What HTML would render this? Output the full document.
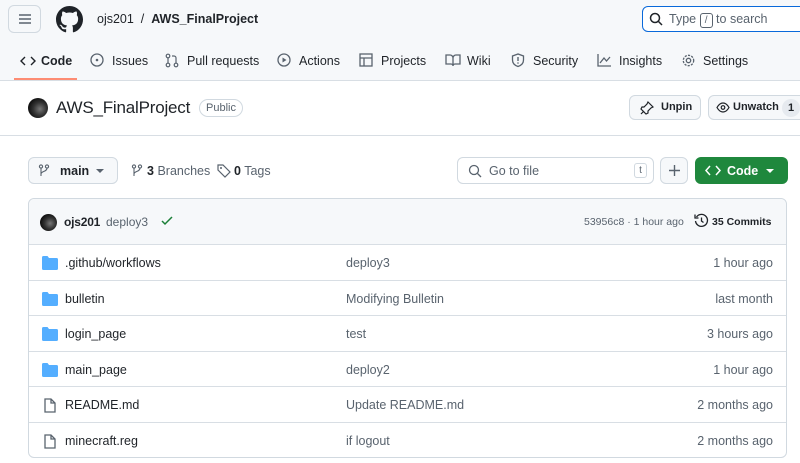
<!DOCTYPE html>
<html><head><meta charset="utf-8"><style>
*{box-sizing:border-box;margin:0;padding:0}
body{width:800px;height:463px;overflow:hidden;background:#fff;font-family:"Liberation Sans",sans-serif;color:#1f2328;font-size:12px;position:relative}
.a{position:absolute;white-space:nowrap}
.hdr{position:absolute;left:0;top:0;width:800px;height:81px;background:#f6f8fa;border-bottom:1px solid #d8dee4}
.btn{position:absolute;border:1px solid #d1d9e0;border-radius:6px;background:#f6f8fa}
svg{position:absolute}
.tab{position:absolute;top:54px;font-size:12.5px;color:#1f2328}
.row{position:absolute;left:29px;width:757px;height:35.5px;border-top:1px solid #d8dee4;font-size:12.5px}
.row .n{position:absolute;left:36px;top:11px}
.row .m{position:absolute;left:317px;top:11px;color:#59636e}
.row .t{position:absolute;right:13px;top:11px;color:#59636e}
.row svg{left:13px;top:11px}
</style></head><body>
<div class="hdr"></div>
<div class="btn" style="left:8px;top:5px;width:33px;height:28px"></div>
<svg style="left:18px;top:13px" width="14" height="12"><path d="M1 2h12M1 6h12M1 10h12" stroke="#59636e" stroke-width="1.5"/></svg>
<svg style="left:56px;top:6px" width="27" height="27" viewBox="0 0 16 16"><path fill="#1f2328" d="M8 0C3.58 0 0 3.58 0 8c0 3.540 2.29 6.53 5.47 7.59.4.07.55-.17.55-.38 0-.19-.01-.82-.01-1.49-2.010.37-2.53-.49-2.69-.94-.09-.23-.48-.94-.82-1.13-.28-.15-.68-.52-.01-.53.63-.01 1.08.58 1.23.82.72 1.21 1.87.87 2.33.66.07-.52.28-.87.51-1.070-1.78-.2-3.64-.89-3.64-3.95 0-.87.31-1.59.82-2.15-.08-.2-.36-1.02.08-2.12 0 0 .67-.21 2.2.82.64-.18 1.32-.27 2-.27.68 0 1.36.09 2 .27 1.53-1.04 2.2-.82 2.2-.82.44 1.1.16 1.92.08 2.12.51.56.82 1.27.82 2.15 0 3.07-1.87 3.75-3.65 3.95.29.25.54.73.54 1.48 0 1.07-.01 1.93-.01 2.2 0 .21.15.46.55.38A8.013 8.013 0 0016 8c0-4.42-3.58-8-8-8z"/></svg>
<div class="a" style="left:97px;top:12px;font-size:12.5px">ojs201 &nbsp;/&nbsp; <b style="font-weight:600">AWS_FinalProject</b></div>
<div class="a" style="left:642px;top:6px;width:170px;height:26px;border:1.5px solid #0969da;border-radius:6px;background:#fff"></div>
<svg style="left:649px;top:12px" width="14" height="14"><circle cx="6" cy="6" r="4.5" fill="none" stroke="#1f2328" stroke-width="1.5"/><path d="M9.5 9.5l3.5 3.5" stroke="#1f2328" stroke-width="1.5"/></svg>
<div class="a" style="left:669px;top:12px;color:#59636e;font-size:12.5px">Type <span style="display:inline-block;border:1px solid #59636e;border-radius:3px;width:13px;height:15px;text-align:center;font-size:10px;line-height:13px">/</span> to search</div>

<svg style="left:20px;top:55px" width="16" height="12"><path d="M5 2L1 6l4 4M11 2l4 4-4 4" fill="none" stroke="#1f2328" stroke-width="1.4"/></svg>
<div class="tab" style="left:41px;font-weight:600">Code</div>
<div class="a" style="left:14px;top:78px;width:63px;height:2px;background:#fd8c73"></div>
<svg style="left:90px;top:53px" width="15" height="15"><circle cx="7" cy="7" r="6" fill="none" stroke="#59636e" stroke-width="1.3"/><circle cx="7" cy="7" r="1.3" fill="#59636e"/></svg>
<div class="tab" style="left:112px">Issues</div>
<svg style="left:165px;top:53px" width="15" height="15"><circle cx="3" cy="3" r="1.8" fill="none" stroke="#59636e" stroke-width="1.2"/><circle cx="3" cy="12" r="1.8" fill="none" stroke="#59636e" stroke-width="1.2"/><circle cx="11" cy="12" r="1.8" fill="none" stroke="#59636e" stroke-width="1.2"/><path d="M3 5v5M11 10V5a2 2 0 0 0-2-2H7" fill="none" stroke="#59636e" stroke-width="1.2"/></svg>
<div class="tab" style="left:187px">Pull requests</div>
<svg style="left:277px;top:53px" width="15" height="15"><circle cx="7" cy="7" r="6" fill="none" stroke="#59636e" stroke-width="1.3"/><path d="M5.5 4.5v5l4-2.5z" fill="#59636e"/></svg>
<div class="tab" style="left:299px">Actions</div>
<svg style="left:359px;top:53px" width="15" height="15"><rect x="1" y="1" width="12" height="12" fill="none" stroke="#59636e" stroke-width="1.3"/><path d="M1 5h12M5 5v8" stroke="#59636e" stroke-width="1.3"/></svg>
<div class="tab" style="left:381px">Projects</div>
<svg style="left:445px;top:54px" width="16" height="13"><path d="M1 1h4a3 3 0 0 1 3 3v8a2 2 0 0 0-2-2H1zM15 1h-4a3 3 0 0 0-3 3v8a2 2 0 0 1 2-2h5z" fill="none" stroke="#59636e" stroke-width="1.3"/></svg>
<div class="tab" style="left:467px">Wiki</div>
<svg style="left:511px;top:53px" width="14" height="15"><path d="M7 1L1.5 3v4c0 3.5 2.5 5.5 5.5 6.5 3-1 5.5-3 5.5-6.5V3z" fill="none" stroke="#59636e" stroke-width="1.3"/><path d="M7 4v4" stroke="#59636e" stroke-width="1.4"/><circle cx="7" cy="10" r=".8" fill="#59636e"/></svg>
<div class="tab" style="left:533px">Security</div>
<svg style="left:597px;top:53px" width="15" height="15"><path d="M1 1v12h13M3 10l4-5 2.5 3L13 4" fill="none" stroke="#59636e" stroke-width="1.3"/></svg>
<div class="tab" style="left:619px">Insights</div>
<svg style="left:681px;top:53px" width="15" height="15"><circle cx="7.5" cy="7.5" r="5.2" fill="none" stroke="#59636e" stroke-width="1.3" stroke-dasharray="2.2 1.2"/><circle cx="7.5" cy="7.5" r="2.2" fill="none" stroke="#59636e" stroke-width="1.3"/></svg>
<div class="tab" style="left:703px">Settings</div>

<div class="a" style="left:28px;top:98px;width:20px;height:20px;border-radius:50%;background:radial-gradient(circle at 60% 55%,#777 0,#333 40%,#111 70%)"></div>
<div class="a" style="left:56px;top:98px;font-size:17px;letter-spacing:-0.2px">AWS_FinalProject</div>
<div class="a" style="left:199px;top:99px;height:18px;padding:0 6px;border:1px solid #d1d9e0;border-radius:9px;font-size:11px;line-height:16px;color:#59636e">Public</div>
<div class="btn" style="left:629px;top:95px;width:72px;height:25px"></div>
<svg style="left:640px;top:101px" width="14" height="14"><path d="M8 1l5 5-2 1-3 3v2l-2 1-5-5 1-2h2l3-3z M4 10l-3 3" fill="none" stroke="#1f2328" stroke-width="1.2"/></svg>
<div class="a" style="left:661px;top:95px;line-height:25px;font-size:11px;font-weight:600">Unpin</div>
<div class="btn" style="left:708px;top:95px;width:100px;height:25px"></div>
<svg style="left:716px;top:102px" width="14" height="11"><path d="M1 5.5C3 2 5 1 7 1s4 1 6 4.5C11 9 9 10 7 10S3 9 1 5.5z" fill="none" stroke="#1f2328" stroke-width="1.2"/><circle cx="7" cy="5.5" r="1.8" fill="none" stroke="#1f2328" stroke-width="1.2"/></svg>
<div class="a" style="left:733px;top:95px;line-height:25px;font-size:11px;font-weight:600">Unwatch</div>
<div class="a" style="left:782px;top:99px;width:18px;height:18px;border-radius:9px;background:#e6eaef;font-size:11px;text-align:center;line-height:18px;font-weight:600">1</div>
<div class="a" style="left:0;top:135px;width:800px;height:1px;background:#d8dee4"></div>

<div class="btn" style="left:28px;top:157px;width:90px;height:27px"></div>
<svg style="left:38px;top:164px" width="12" height="14"><circle cx="3" cy="2.5" r="1.6" fill="none" stroke="#59636e" stroke-width="1.1"/><circle cx="9" cy="2.5" r="1.6" fill="none" stroke="#59636e" stroke-width="1.1"/><path d="M3 4v8M9 4c0 4-6 3-6 6" fill="none" stroke="#59636e" stroke-width="1.1"/></svg>
<div class="a" style="left:60px;top:164px;font-weight:600;font-size:12.5px">main</div>
<svg style="left:96px;top:169px" width="8" height="5"><path d="M0 0h8L4 4z" fill="#59636e"/></svg>
<svg style="left:131px;top:164px" width="12" height="14"><circle cx="3" cy="2.5" r="1.6" fill="none" stroke="#59636e" stroke-width="1.1"/><circle cx="9" cy="2.5" r="1.6" fill="none" stroke="#59636e" stroke-width="1.1"/><path d="M3 4v8M9 4c0 4-6 3-6 6" fill="none" stroke="#59636e" stroke-width="1.1"/></svg>
<div class="a" style="left:147px;top:164px;font-size:12.5px"><b style="font-weight:600">3</b> <span style="color:#59636e">Branches</span></div>
<svg style="left:217px;top:164px" width="14" height="14"><path d="M1 1h5l7 7-5 5-7-7z" fill="none" stroke="#59636e" stroke-width="1.2"/><circle cx="4" cy="4" r="1" fill="#59636e"/></svg>
<div class="a" style="left:234px;top:164px;font-size:12.5px"><b style="font-weight:600">0</b> <span style="color:#59636e">Tags</span></div>
<div class="a" style="left:457px;top:157px;width:197px;height:27px;border:1px solid #d1d9e0;border-radius:6px;background:#fff"></div>
<svg style="left:468px;top:164px" width="14" height="14"><circle cx="6" cy="6" r="4.5" fill="none" stroke="#59636e" stroke-width="1.3"/><path d="M9.5 9.5l3.5 3.5" stroke="#59636e" stroke-width="1.3"/></svg>
<div class="a" style="left:489px;top:164px;color:#59636e;font-size:12.5px">Go to file</div>
<div class="a" style="left:634px;top:163px;width:13px;height:15px;border:1px solid #d1d9e0;border-radius:3px;font-size:10px;text-align:center;line-height:13px;color:#59636e">t</div>
<div class="btn" style="left:660px;top:157px;width:28px;height:27px"></div>
<svg style="left:668px;top:164px" width="13" height="13"><path d="M6.5 1v11M1 6.5h11" stroke="#59636e" stroke-width="1.4"/></svg>
<div class="a" style="left:695px;top:157px;width:93px;height:27px;background:#1f883d;border-radius:6px"></div>
<svg style="left:705px;top:165px" width="16" height="11"><path d="M5 1L1 5.5 5 10M11 1l4 4.5-4 4.5" fill="none" stroke="#fff" stroke-width="1.5"/></svg>
<div class="a" style="left:727px;top:164px;color:#fff;font-weight:600;font-size:12.5px">Code</div>
<svg style="left:766px;top:169px" width="8" height="5"><path d="M0 0h8L4 4z" fill="#fff"/></svg>

<div class="a" style="left:28px;top:198px;width:759px;height:260px;border:1px solid #d1d9e0;border-radius:6px"></div>
<div class="a" style="left:29px;top:199px;width:757px;height:45px;background:#f6f8fa;border-radius:6px 6px 0 0"></div>
<div class="a" style="left:40px;top:214px;width:17px;height:17px;border-radius:50%;background:radial-gradient(circle at 60% 55%,#777 0,#333 40%,#111 70%)"></div>
<div class="a" style="left:64px;top:215px;font-weight:600;font-size:12px;letter-spacing:-0.2px">ojs201</div>
<div class="a" style="left:106px;top:215px;color:#59636e;font-size:12px">deploy3</div>
<svg style="left:161px;top:216px" width="12" height="10"><path d="M1 5l3 3 7-7" fill="none" stroke="#1a7f37" stroke-width="1.5"/></svg>
<div class="a" style="left:584px;top:216px;font-size:10.5px;color:#59636e">53956c8 · 1 hour ago</div>
<svg style="left:694px;top:213px" width="15" height="15"><path d="M2.5 4A6 6 0 1 1 1.5 8" fill="none" stroke="#1f2328" stroke-width="1.3"/><path d="M1 1.5v3.5h3.5" fill="none" stroke="#1f2328" stroke-width="1.3"/><path d="M7.5 4.5v3.5l2 1.5" fill="none" stroke="#1f2328" stroke-width="1.3"/></svg>
<div class="a" style="left:712px;top:216px;font-size:10.5px;font-weight:600">35 Commits</div>

<div class="row" style="top:244px"><svg width="16" height="14"><path d="M0 1.5A1.5 1.5 0 0 1 1.5 0h4l1.5 2h7.5A1.5 1.5 0 0 1 16 3.5v9a1.5 1.5 0 0 1-1.5 1.5h-13A1.5 1.5 0 0 1 0 12.5z" fill="#54aeff"/></svg><span class="n">.github/workflows</span><span class="m">deploy3</span><span class="t">1 hour ago</span></div>
<div class="row" style="top:280px"><svg width="16" height="14"><path d="M0 1.5A1.5 1.5 0 0 1 1.5 0h4l1.5 2h7.5A1.5 1.5 0 0 1 16 3.5v9a1.5 1.5 0 0 1-1.5 1.5h-13A1.5 1.5 0 0 1 0 12.5z" fill="#54aeff"/></svg><span class="n">bulletin</span><span class="m">Modifying Bulletin</span><span class="t">last month</span></div>
<div class="row" style="top:315px"><svg width="16" height="14"><path d="M0 1.5A1.5 1.5 0 0 1 1.5 0h4l1.5 2h7.5A1.5 1.5 0 0 1 16 3.5v9a1.5 1.5 0 0 1-1.5 1.5h-13A1.5 1.5 0 0 1 0 12.5z" fill="#54aeff"/></svg><span class="n">login_page</span><span class="m">test</span><span class="t">3 hours ago</span></div>
<div class="row" style="top:351px"><svg width="16" height="14"><path d="M0 1.5A1.5 1.5 0 0 1 1.5 0h4l1.5 2h7.5A1.5 1.5 0 0 1 16 3.5v9a1.5 1.5 0 0 1-1.5 1.5h-13A1.5 1.5 0 0 1 0 12.5z" fill="#54aeff"/></svg><span class="n">main_page</span><span class="m">deploy2</span><span class="t">1 hour ago</span></div>
<div class="row" style="top:386px"><svg width="16" height="16"><path d="M3 1h6l4 4v9H3z M9 1v4h4" fill="none" stroke="#59636e" stroke-width="1.3"/></svg><span class="n">README.md</span><span class="m">Update README.md</span><span class="t">2 months ago</span></div>
<div class="row" style="top:422px"><svg width="16" height="16"><path d="M3 1h6l4 4v9H3z M9 1v4h4" fill="none" stroke="#59636e" stroke-width="1.3"/></svg><span class="n">minecraft.reg</span><span class="m">if logout</span><span class="t">2 months ago</span></div>
</body></html>
